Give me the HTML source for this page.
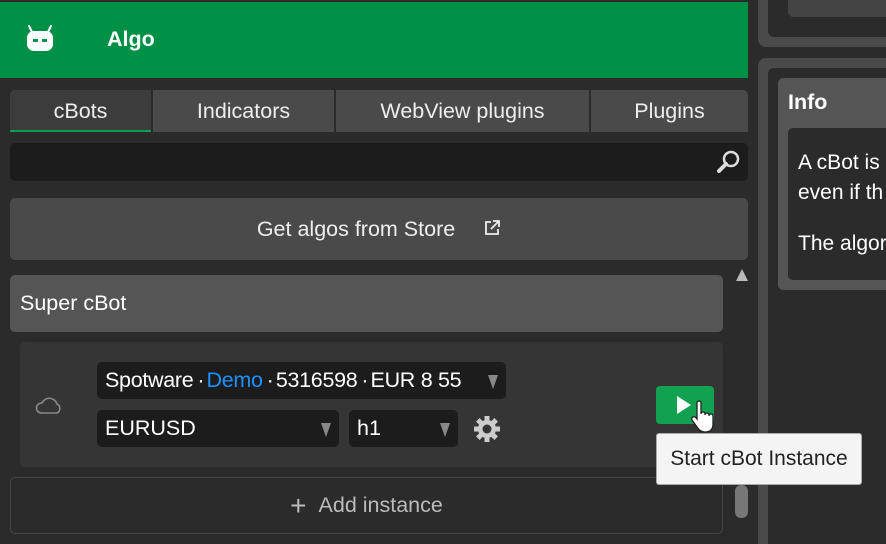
<!DOCTYPE html>
<html><head><meta charset="utf-8"><style>
*{box-sizing:border-box;margin:0;padding:0}
html,body{width:886px;height:544px;overflow:hidden}
body{background:#2b2b2b;font-family:"Liberation Sans",sans-serif;color:#fff;position:relative}
.a{position:absolute}
.tab{position:absolute;top:90px;height:42px;background:#4a4a4a;font-size:21.5px;line-height:42px;text-align:center;color:#eee}
.dd{position:absolute;background:#1c1c1c;border-radius:5px;font-size:21.5px;line-height:37px;padding-left:8px;color:#fff;white-space:nowrap;overflow:hidden}
.ar{position:absolute;right:8px;top:13px;width:0;height:0;border-left:5px solid transparent;border-right:5px solid transparent;border-top:14px solid #888}
</style></head><body>
<div class="a" style="left:0;top:0;width:748px;height:2px;background:#2b2b2b"></div>
<div class="a" style="left:0;top:2px;width:748px;height:76px;background:#009147"></div>
<svg class="a" style="left:24px;top:24px" width="32" height="28" viewBox="0 0 32 28">
<path d="M5 2 L8 8 M27 2 L24 8" stroke="#fff" stroke-width="2" stroke-linecap="round"/>
<rect x="3" y="7" width="26" height="20" rx="7" fill="#fff"/>
<rect x="9" y="15" width="5" height="3" fill="#009147"/><rect x="18" y="15" width="5" height="3" fill="#009147"/>
</svg>
<div class="a" style="left:107px;top:27px;font-size:21.5px;font-weight:bold">Algo</div>

<div class="tab" style="left:10px;width:141px;background:#3c3c3c;border-bottom:2px solid #00a050;border-radius:5px 0 0 0">cBots</div>
<div class="tab" style="left:153px;width:181px">Indicators</div>
<div class="tab" style="left:336px;width:253px">WebView plugins</div>
<div class="tab" style="left:591px;width:157px;border-radius:0 5px 0 0">Plugins</div>

<div class="a" style="left:10px;top:143px;width:738px;height:38px;background:#1c1c1c;border-radius:5px"></div>
<svg class="a" style="left:716px;top:149px" width="26" height="26" viewBox="0 0 26 26"><circle cx="15" cy="10" r="7" fill="none" stroke="#ddd" stroke-width="2.5"/><path d="M10 15 L3 22" stroke="#ddd" stroke-width="4" stroke-linecap="round"/></svg>

<div class="a" style="left:10px;top:198px;width:738px;height:62px;background:#4a4a4a;border-radius:5px;text-align:center;line-height:62px;font-size:21.5px;color:#eee">Get algos from Store <svg width="18" height="18" viewBox="0 0 18 18" style="margin-left:22px;vertical-align:-1px"><path d="M8 3H3V15H15V10M10 2H16V8M16 2L8 10" fill="none" stroke="#eee" stroke-width="1.8"/></svg></div>

<div class="a" style="left:10px;top:275px;width:713px;height:57px;background:#555;border-radius:5px;line-height:57px;padding-left:10px;font-size:21.5px">Super cBot</div>

<div class="a" style="left:20px;top:342px;width:703px;height:125px;background:#353535;border-radius:5px"></div>
<svg class="a" style="left:34px;top:394px" width="30" height="22" viewBox="0 0 30 22"><path d="M7 19H23A5 5 0 0 0 23 10A8 8 0 0 0 8 9A5 5 0 0 0 7 19Z" fill="none" stroke="#888" stroke-width="1.6"/></svg>
<div class="dd" style="left:97px;top:362px;width:409px;height:37px"><div style="width:373px;overflow:hidden;letter-spacing:-0.3px">Spotware<span style="letter-spacing:-2px"> · </span><span style="color:#1e90ff">Demo</span><span style="letter-spacing:-2px"> · </span>5316598<span style="letter-spacing:-2px"> · </span>EUR 8 55</div><span class="ar"></span></div>
<div class="dd" style="left:97px;top:410px;width:242px;height:37px">EURUSD<span class="ar"></span></div>
<div class="dd" style="left:349px;top:410px;width:109px;height:37px">h1<span class="ar"></span></div>
<svg class="a" style="left:473px;top:415px" width="28" height="28" viewBox="0 0 28 28"><g fill="#ccc"><circle cx="14" cy="14" r="9"/><rect x="11.5" y="1" width="5" height="26"/><rect x="11.5" y="1" width="5" height="26" transform="rotate(45 14 14)"/><rect x="11.5" y="1" width="5" height="26" transform="rotate(90 14 14)"/><rect x="11.5" y="1" width="5" height="26" transform="rotate(135 14 14)"/></g><circle cx="14" cy="14" r="4.5" fill="#353535"/></svg>

<div class="a" style="left:10px;top:477px;width:713px;height:57px;border:1px solid #464646;border-radius:5px;text-align:center;line-height:55px;font-size:21.5px;color:#bbb"><span style="font-size:28px;font-weight:200;vertical-align:-3px;margin-right:12px">+</span>Add instance</div>

<div class="a" style="left:736px;top:269px;width:0;height:0;border-left:6px solid transparent;border-right:6px solid transparent;border-bottom:12px solid #bbb"></div>
<div class="a" style="left:735px;top:485px;width:13px;height:33px;background:#777;border-radius:6px"></div>

<!-- right column -->
<div class="a" style="left:758px;top:-10px;width:140px;height:57px;background:#4a4a4a;border-radius:8px"></div>
<div class="a" style="left:768px;top:-10px;width:130px;height:47px;background:#2b2b2b;border-radius:6px"></div>
<div class="a" style="left:788px;top:-10px;width:110px;height:27px;background:#444;border-radius:5px"></div>
<div class="a" style="left:758px;top:58px;width:140px;height:500px;background:#4a4a4a;border-radius:8px"></div>
<div class="a" style="left:768px;top:68px;width:130px;height:490px;background:#2b2b2b;border-radius:6px"></div>
<div class="a" style="left:778px;top:78px;width:120px;height:212px;background:#555;border-radius:5px"></div>
<div class="a" style="left:788px;top:90px;font-size:21.5px;font-weight:bold">Info</div>
<div class="a" style="left:788px;top:128px;width:110px;height:152px;background:#2b2b2b;border-radius:5px;padding:20px 0 0 10px;font-size:21px;line-height:30px;white-space:nowrap;overflow:hidden">A cBot is<br>even if th<div style="margin-top:21px">The algor</div></div>

<div class="a" style="left:656px;top:386px;width:58px;height:38px;background:#11a150;border-radius:4px;z-index:5"></div>
<svg class="a" style="left:676px;top:395px;z-index:6" width="16" height="20"><path d="M1 1L15 10L1 19Z" fill="#fff"/></svg>
<svg class="a" style="left:690px;top:400px;z-index:7" width="26" height="34" viewBox="0 0 26 34"><path d="M7 3Q7 1 9 1Q11 1 11 3V14Q11 12 13 12Q15 12 15 14V15Q15 13 17 13Q19 13 19 15V16Q19 14 21 14Q23 14 23 16V24Q23 32 15 32Q10 32 7 27L2 20Q1 18 3 17Q5 16 7 19Z" fill="#fff" stroke="#222" stroke-width="1.3"/></svg>
<div class="a" style="left:656px;top:433px;width:206px;height:52px;background:#f4f4f4;border:1px solid #aaa;border-radius:3px;color:#222;font-size:21px;line-height:50px;text-align:center;white-space:nowrap;z-index:6">Start cBot Instance</div>
</body></html>
